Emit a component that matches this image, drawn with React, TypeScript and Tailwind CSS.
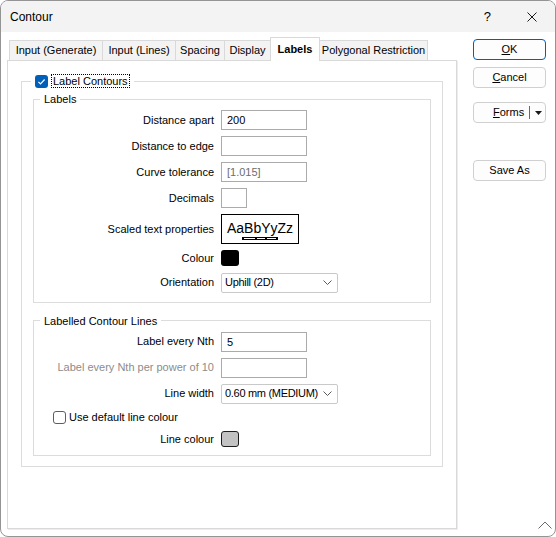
import * as React from "react";

type Tab = { name: string; w: string; selected?: boolean; last?: boolean };

const tabs: Tab[] = [
  { name: "Input (Generate)", w: "w-[93px]" },
  { name: "Input (Lines)", w: "w-[73px]" },
  { name: "Spacing", w: "w-[49px]" },
  { name: "Display", w: "w-[46px]" },
  { name: "Labels", w: "w-[50px]", selected: true },
  { name: "Polygonal Restriction", w: "w-[108px]", last: true },
];

function TabStrip() {
  return (
    <div className="flex h-[28px] items-end pl-[2px]">
      {tabs.map((t, i) => {
        const prevSelected = i > 0 && tabs[i - 1].selected;
        let cls = "flex items-center justify-center border-t border-[#d9d9d9] whitespace-nowrap ";
        if (t.selected) {
          cls += "relative z-10 -mb-px h-[24px] border-l border-r bg-white pb-[1px] font-bold";
        } else {
          cls += "h-[20px] bg-[#f3f3f3] ";
          cls += prevSelected ? "" : "border-l ";
          cls += t.last ? "border-r" : "";
        }
        return (
          <div key={t.name} className={`${t.w} ${cls}`}>
            {t.name}
          </div>
        );
      })}
    </div>
  );
}

function Row({
  label,
  disabled,
  children,
}: {
  label: string;
  disabled?: boolean;
  children: React.ReactNode;
}) {
  return (
    <div className="flex items-center">
      <div
        className={`w-[180px] text-right whitespace-nowrap ${
          disabled ? "text-[#8c8c8c]" : "text-black"
        }`}
      >
        {label}
      </div>
      <div className="ml-[7px] flex">{children}</div>
    </div>
  );
}

function TextBox({ value, w = "w-[86px]", muted }: { value?: string; w?: string; muted?: boolean }) {
  return (
    <div
      className={`${w} h-[20px] border border-[#ababab] bg-white pl-[5px] leading-[18px] ${
        muted ? "text-[#6d6d6d]" : "text-black"
      }`}
    >
      {value}
    </div>
  );
}

function Select({ value }: { value: string }) {
  return (
    <div className="flex h-[20px] w-[117px] items-center justify-between rounded-[2px] border border-[#c9c9c9] bg-white pl-[3px] pr-[5px]">
      <span className="whitespace-nowrap tracking-[-0.3px]">{value}</span>
      <svg className="shrink-0" width="9" height="5" viewBox="0 0 9 5" fill="none">
        <path d="M0.5 0.5 L4.5 4.5 L8.5 0.5" stroke="#5a5a5a" strokeWidth="1" />
      </svg>
    </div>
  );
}

function Swatch({ color }: { color: "black" | "grey" }) {
  return color === "black" ? (
    <div className="h-[16px] w-[18px] rounded-[3px] bg-black" />
  ) : (
    <div className="h-[16px] w-[18px] rounded-[3px] border border-[#1f1f1f] bg-[#c3c3c3]" />
  );
}

function CheckBox({ checked }: { checked?: boolean }) {
  if (checked)
    return (
      <div className="flex h-[13px] w-[13px] items-center justify-center rounded-[3px] bg-[#005fb8]">
        <svg width="13" height="13" viewBox="0 0 13 13" fill="none">
          <path d="M3.4 6.9 L5.5 8.9 L9.6 4.5" stroke="white" strokeWidth="1.2" />
        </svg>
      </div>
    );
  return <div className="h-[13px] w-[13px] rounded-[3px] border border-[#5f5f5f] bg-white" />;
}

function ScaledText() {
  return (
    <div className="flex h-[30px] w-[78px] flex-col items-center border border-black bg-white">
      <div className="mt-[6px] text-[14px] leading-[14px]">AaBbYyZz</div>
      <svg className="mt-[2px]" width="36" height="3" viewBox="0 0 36 3">
        <rect x="0" y="0" width="36" height="3" fill="#000" />
        <rect x="2" y="1" width="11" height="1" fill="#fff" />
        <rect x="15" y="1" width="8" height="1" fill="#fff" />
        <rect x="25" y="1" width="9" height="1" fill="#fff" />
      </svg>
    </div>
  );
}

function Button({
  children,
  primary,
  className = "",
}: {
  children: React.ReactNode;
  primary?: boolean;
  className?: string;
}) {
  return (
    <button
      className={`flex h-[21px] w-[73px] items-center justify-center rounded-[4px] border bg-[#fdfdfd] ${
        primary ? "border-[#005fb8]" : "border-[#d0d0d0]"
      } ${className}`}
    >
      {children}
    </button>
  );
}

export default function App() {
  return (
    <div className="relative flex h-[537px] w-[556px] flex-col overflow-hidden rounded-[8px] border border-[#949494] bg-white font-['Liberation_Sans',Arial,sans-serif] text-[11px] text-black">
      {/* title bar */}
      <div className="flex h-[31px] shrink-0 items-center bg-[#f3f3f3] pl-[9px] text-[12px]">
        <span>Contour</span>
        <span className="ml-auto text-[13px]">?</span>
        <svg className="ml-[36px] mr-[18px]" width="10" height="10" viewBox="0 0 10 10">
          <path d="M0.5 0.5 L9.5 9.5 M9.5 0.5 L0.5 9.5" stroke="#1a1a1a" strokeWidth="1" />
        </svg>
      </div>

      <div className="flex flex-1">
        {/* tabs + page */}
        <div className="ml-[6px] flex w-[450px] flex-col pb-[7px]">
          <TabStrip />
          <div className="flex-1 border border-[#d9d9d9] bg-white shadow-[1px_1px_0_#ededed]">
            <fieldset className="mx-[13px] mt-[12px] border border-[#dcdcdc] pb-[10px]">
              <legend className="ml-[9px] flex h-[16px] items-center px-[4px]">
                <CheckBox checked />
                <span className="ml-[3px] border border-dotted border-black px-[1px] leading-[12px]">
                  Label Contours
                </span>
              </legend>

              <fieldset className="mx-[11px] mt-[2px] border border-[#dcdcdc] pb-[9px]">
                <legend className="ml-[6px] px-[4px] leading-[16px]">Labels</legend>
                <div className="flex flex-col gap-[6px] pt-[3px]">
                  <Row label="Distance apart">
                    <TextBox value="200" />
                  </Row>
                  <Row label="Distance to edge">
                    <TextBox />
                  </Row>
                  <Row label="Curve tolerance">
                    <TextBox value="[1.015]" muted />
                  </Row>
                  <Row label="Decimals">
                    <TextBox w="w-[26px]" />
                  </Row>
                  <Row label="Scaled text properties">
                    <ScaledText />
                  </Row>
                  <Row label="Colour">
                    <Swatch color="black" />
                  </Row>
                  <Row label="Orientation">
                    <Select value="Uphill (2D)" />
                  </Row>
                </div>
              </fieldset>

              <fieldset className="mx-[11px] mt-[10px] border border-[#dcdcdc] pb-[8px]">
                <legend className="ml-[6px] px-[4px] leading-[16px]">Labelled Contour Lines</legend>
                <div className="flex flex-col gap-[6px] pt-[3px]">
                  <Row label="Label every Nth">
                    <TextBox value="5" />
                  </Row>
                  <Row label="Label every Nth per power of 10" disabled>
                    <TextBox />
                  </Row>
                  <Row label="Line width">
                    <Select value="0.60 mm (MEDIUM)" />
                  </Row>
                  <div className="ml-[19px] flex h-[15px] items-center">
                    <CheckBox />
                    <span className="ml-[3px]">Use default line colour</span>
                  </div>
                  <Row label="Line colour">
                    <Swatch color="grey" />
                  </Row>
                </div>
              </fieldset>
            </fieldset>
          </div>
        </div>

        {/* dialog buttons */}
        <div className="ml-[16px] flex flex-col pt-[7px]">
          <Button primary>
            <span className="underline">O</span>K
          </Button>
          <Button className="mt-[7px]">
            <span className="underline">C</span>ancel
          </Button>
          <Button className="mt-[14px] !justify-start">
            <span className="ml-[19px]">
              <span className="underline">F</span>orms
            </span>
            <span className="ml-[5px] h-[13px] w-px bg-[#6a6a6a]" />
            <svg className="ml-[5px]" width="7" height="4" viewBox="0 0 7 4">
              <path d="M0 0 H7 L3.5 4 Z" fill="#1a1a1a" />
            </svg>
          </Button>
          <Button className="mt-[37px]">Save As</Button>
        </div>
      </div>

      {/* size grip */}
      <svg className="absolute bottom-[7px] right-[3px]" width="14" height="8" viewBox="0 0 14 8" fill="none">
        <path d="M0.5 7.5 L7 1 L13.5 7.5" stroke="#6b6b6b" strokeWidth="1" />
      </svg>
    </div>
  );
}
